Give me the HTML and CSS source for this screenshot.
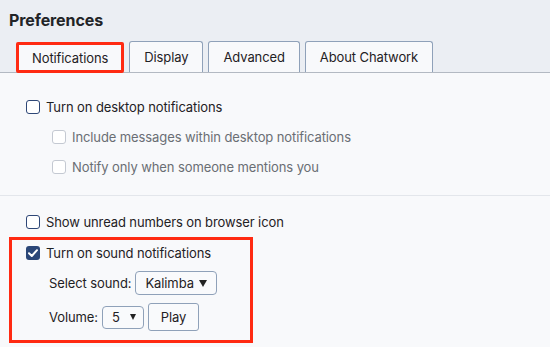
FILE: index.html
```html
<!DOCTYPE html>
<html>
<head>
<meta charset="utf-8">
<link rel="stylesheet" href="styles.css">
</head>
<body>
<div class="header">
  <h1 class="title">Preferences</h1>
  <div class="tabs">
    <div class="tab active">Notifications</div>
    <div class="tab">Display</div>
    <div class="tab">Advanced</div>
    <div class="tab">About Chatwork</div>
  </div>
</div>
<div class="section first">
  <div class="row"><span class="box"></span><span class="label">Turn on desktop notifications</span></div>
  <div class="row sub"><span class="box disabled"></span><span class="label muted">Include messages within desktop notifications</span></div>
  <div class="row sub"><span class="box disabled"></span><span class="label muted">Notify only when someone mentions you</span></div>
</div>
<div class="section second">
  <div class="row indent"><span class="box"></span><span class="label">Show unread numbers on browser icon</span></div>
  <div class="highlight">
    <div class="row tight"><span class="box checked"><svg width="14" height="14" viewBox="0 0 14 14"><path d="M3 7.2 L5.8 10 L11 4.2" fill="none" stroke="#fff" stroke-width="2" stroke-linecap="round" stroke-linejoin="round"/></svg></span><span class="label">Turn on sound notifications</span></div>
    <div class="field">
      <span class="flabel">Select sound:</span>
      <span class="select sound"><span>Kalimba</span><span class="arrow"></span></span>
    </div>
    <div class="field vol">
      <span class="flabel">Volume:</span>
      <span class="select volume"><span>5</span><span class="arrow"></span></span>
      <span class="button">Play</span>
    </div>
  </div>
</div>
</body>
</html>
```
FILE: styles.css
```css
html, body {
  margin: 0;
  padding: 0;
  background: #f8f9fb;
  font-family: Inter, "Noto Sans", sans-serif;
  color: #1f2124;
  font-size: 13px;
  letter-spacing: -0.1px;
}
.header {
  background: #ebeef3;
  padding-top: 9px;
}
.title {
  margin: 0 0 0 9px;
  font-size: 16px;
  font-weight: 700;
  line-height: 22px;
  height: 22px;
  color: #222427;
  letter-spacing: -0.1px;
}
.tabs {
  display: flex;
  align-items: flex-end;
  gap: 5px;
  padding-left: 16px;
  margin-top: 10px;
  border-bottom: 1px solid #b3b9c2;
  height: 31px;
}
.tab {
  box-sizing: border-box;
  height: 31px;
  padding: 0 14px;
  border: 1px solid #8fa1b9;
  border-bottom: none;
  border-radius: 3px 3px 0 0;
  background: #f8f9fb;
  display: flex;
  align-items: center;
  justify-content: center;
}
.tab.active {
  border: 3px solid #ff2a12;
  border-radius: 2px;
  height: 31px;
  margin-bottom: -1px;
  padding: 0 13px;
}
.section {
  padding-left: 26px;
}
.section.first {
  padding-top: 19px;
  padding-bottom: 13px;
  border-bottom: 1px solid #e3e6eb;
}
.section.second {
  padding-left: 9px;
  padding-top: 11px;
}
.row {
  display: flex;
  align-items: center;
  height: 30px;
}
.row.sub {
  padding-left: 26px;
}
.row.indent {
  padding-left: 17px;
}
.row.tight {
  height: 26px;
}
.box {
  box-sizing: border-box;
  width: 14px;
  height: 14px;
  border: 1.5px solid #2e4777;
  border-radius: 3px;
  background: #fff;
  margin-right: 6px;
  flex: none;
  display: flex;
}
.box.disabled {
  border: 1px solid #c4c9d2;
}
.box.checked {
  background: #2b4778;
  border: none;
}
.label {
  line-height: 16px;
}
.muted {
  color: #6a6e74;
}
.highlight {
  box-sizing: border-box;
  width: 244px;
  border: 3px solid #ff2a12;
  padding: 0 0 9px 14px;
}
.field {
  display: flex;
  align-items: center;
  gap: 4px;
  padding-left: 23px;
  margin-top: 5px;
  height: 24px;
}
.field.vol {
  margin-top: 8px;
  height: 28px;
  gap: 4px;
}
.select {
  box-sizing: border-box;
  display: flex;
  align-items: center;
  justify-content: space-between;
  height: 24px;
  border: 1px solid #8fa1b9;
  border-radius: 4px;
  background: #f9fafc;
  padding: 0 9px 0 9px;
}
.select.sound {
  width: 82px;
}
.select.volume {
  width: 42px;
  height: 23px;
  padding: 0 7px 0 9px;
}
.arrow {
  width: 0;
  height: 0;
  border-left: 4px solid transparent;
  border-right: 4px solid transparent;
  border-top: 7px solid #222;
}
.select.volume .arrow {
  border-left-width: 3.5px;
  border-right-width: 3.5px;
  border-top-width: 6px;
}
.button {
  box-sizing: border-box;
  width: 51px;
  height: 28px;
  border: 1px solid #8fa1b9;
  border-radius: 3px;
  background: #f9fafc;
  display: flex;
  align-items: center;
  justify-content: center;
}
```
